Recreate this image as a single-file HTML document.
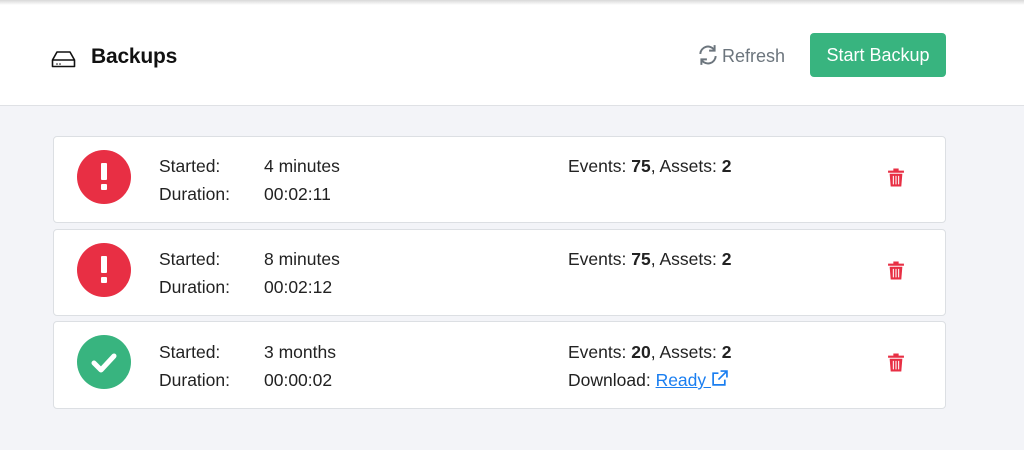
<!DOCTYPE html>
<html><head><style>
*{margin:0;padding:0;box-sizing:border-box}
body{width:1024px;height:450px;background:#f3f4f8;font-family:"Liberation Sans",sans-serif;color:#212529;position:relative;overflow:hidden}
.top{position:absolute;top:0;left:0;width:1024px;height:5px;background:linear-gradient(#d8d8d8,#fff)}
.hdr{position:absolute;top:5px;left:0;width:1024px;height:101px;background:#fff;border-bottom:1px solid #dfe1e5}
.title{position:absolute;left:91px;top:40px;font-size:21px;color:#111;font-weight:bold;letter-spacing:-0.2px}
.hd-ic{position:absolute;left:51px;top:44px}
.refresh{position:absolute;left:697px;top:39px;font-size:18px;color:#6c757d}
.btn{position:absolute;left:810px;top:28px;width:136px;height:44px;background:#38b47f;border-radius:4px;color:#fff;font-size:18px;text-align:center;line-height:44px}
.card{position:absolute;left:53px;width:893px;background:#fff;border:1px solid #dcdfe3;border-radius:4px}
.circ{position:absolute;left:23px;top:13px;width:54px;height:54px;border-radius:50%}
.red{background:#e82f44}.green{background:#38b47f}
.t{position:absolute;font-size:17.5px;line-height:28px;color:#222}
.trash{position:absolute;left:833px;top:30px}
a{color:#1a7ef0;text-decoration:underline}
</style></head><body>
<div class="top"></div>
<div class="hdr">
<svg class="hd-ic" width="25" height="20" viewBox="0 0 25 20"><path d="M6 3h13l4.5 8v6.5H1.5V11z M1.5 11h22" fill="none" stroke="#111" stroke-width="1.6" stroke-linejoin="round"/><circle cx="6" cy="15" r=".8" fill="#111"/><circle cx="9" cy="15" r=".8" fill="#111"/></svg>
<div class="title">Backups</div>
<div class="refresh"><svg width="22" height="22" viewBox="0 0 20 20" style="vertical-align:-4px;margin-right:3px"><path d="M3 9a7 7 0 0 1 12.5-4M17 11a7 7 0 0 1-12.5 4" fill="none" stroke="#6c757d" stroke-width="1.8"/><path d="M16 1v5h-5M4 19v-5h5" fill="none" stroke="#6c757d" stroke-width="1.8"/></svg>Refresh</div>
<div class="btn">Start Backup</div>
</div>

<div class="card" style="top:136px;height:87px">
<div class="circ red"><svg width="54" height="54"><rect x="24" y="13" width="6" height="17" rx="1" fill="#fff"/><rect x="24" y="34" width="6" height="6" rx="1" fill="#fff"/></svg></div>
<div class="t" style="left:105px;top:15px">Started:<br>Duration:</div>
<div class="t" style="left:210px;top:15px">4 minutes<br>00:02:11</div>
<div class="t" style="left:514px;top:15px">Events: <b>75</b>, Assets: <b>2</b></div>
<svg class="trash" width="18" height="21" viewBox="0 0 17 19"><path d="M6 1h5v2h5v2H1V3h5z" fill="#e82f44"/><path d="M2.5 6h12l-1 12h-10z" fill="#e82f44"/><path d="M6 8v8M8.5 8v8M11 8v8" stroke="#fff" stroke-width="1"/></svg>
</div>

<div class="card" style="top:229px;height:87px">
<div class="circ red"><svg width="54" height="54"><rect x="24" y="13" width="6" height="17" rx="1" fill="#fff"/><rect x="24" y="34" width="6" height="6" rx="1" fill="#fff"/></svg></div>
<div class="t" style="left:105px;top:15px">Started:<br>Duration:</div>
<div class="t" style="left:210px;top:15px">8 minutes<br>00:02:12</div>
<div class="t" style="left:514px;top:15px">Events: <b>75</b>, Assets: <b>2</b></div>
<svg class="trash" width="18" height="21" viewBox="0 0 17 19"><path d="M6 1h5v2h5v2H1V3h5z" fill="#e82f44"/><path d="M2.5 6h12l-1 12h-10z" fill="#e82f44"/><path d="M6 8v8M8.5 8v8M11 8v8" stroke="#fff" stroke-width="1"/></svg>
</div>

<div class="card" style="top:321px;height:88px">
<div class="circ green"><svg width="54" height="54"><path d="M17 28l7 7 13-14" fill="none" stroke="#fff" stroke-width="5" stroke-linecap="round" stroke-linejoin="round"/></svg></div>
<div class="t" style="left:105px;top:16px">Started:<br>Duration:</div>
<div class="t" style="left:210px;top:16px">3 months<br>00:00:02</div>
<div class="t" style="left:514px;top:16px">Events: <b>20</b>, Assets: <b>2</b><br>Download: <a>Ready <svg width="17" height="17" viewBox="0 0 16 16" style="vertical-align:-1px"><path d="M7 3H2v11h11V9M9 1h6v6M15 1L7 9" fill="none" stroke="#1a7ef0" stroke-width="1.6"/></svg></a></div>
<svg class="trash" width="18" height="21" viewBox="0 0 17 19"><path d="M6 1h5v2h5v2H1V3h5z" fill="#e82f44"/><path d="M2.5 6h12l-1 12h-10z" fill="#e82f44"/><path d="M6 8v8M8.5 8v8M11 8v8" stroke="#fff" stroke-width="1"/></svg>
</div>
</body></html>
